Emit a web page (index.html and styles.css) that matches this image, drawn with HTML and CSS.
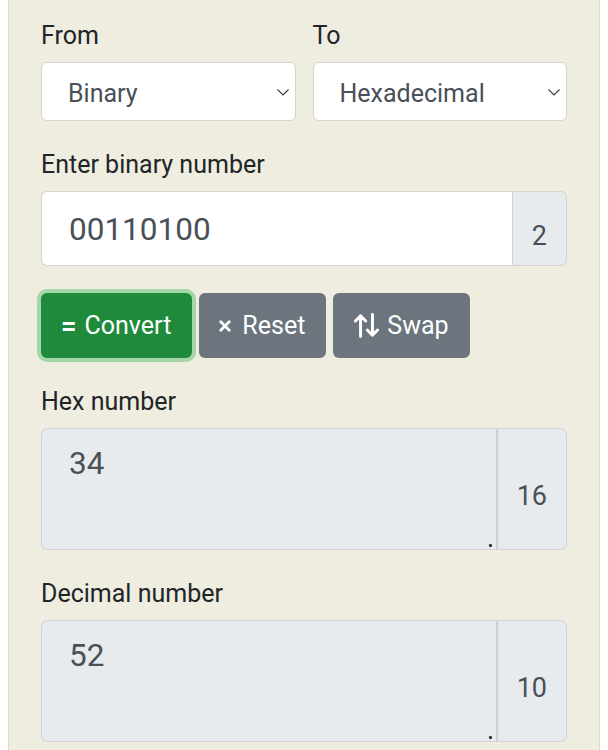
FILE: index.html
```html
<!DOCTYPE html>
<html lang="en">
<head>
<meta charset="utf-8">
<title>Binary to Hex converter</title>
<link rel="stylesheet" href="styles.css">
</head>
<body>
<main class="card">
  <div class="row group">
    <div class="col">
      <div class="label">From</div>
      <div class="select">
        <span>Binary</span>
        <svg class="chev" viewBox="0 0 12 7" width="12" height="7"><polyline points="0.5,0.5 6,6 11.5,0.5" fill="none" stroke="#343a40" stroke-width="1.1"/></svg>
      </div>
    </div>
    <div class="col">
      <div class="label">To</div>
      <div class="select">
        <span>Hexadecimal</span>
        <svg class="chev" viewBox="0 0 12 7" width="12" height="7"><polyline points="0.5,0.5 6,6 11.5,0.5" fill="none" stroke="#343a40" stroke-width="1.1"/></svg>
      </div>
    </div>
  </div>

  <div class="group">
    <div class="label">Enter binary number</div>
    <div class="input-group">
      <div class="input">00110100</div>
      <div class="addon">2</div>
    </div>
  </div>

  <div class="buttons group">
    <button class="btn btn-success"><span class="eq">=</span><span>Convert</span></button>
    <button class="btn btn-secondary btn-reset"><svg class="x" viewBox="0 0 10 10" width="12" height="12"><path d="M1.5 1.5 L8.5 8.5 M8.5 1.5 L1.5 8.5" stroke="#fff" stroke-width="2.3" stroke-linecap="round"/></svg><span>Reset</span></button>
    <button class="btn btn-secondary btn-swap"><svg class="swap" viewBox="0 0 16 16" width="27" height="25"><path d="M4.2 15 V1.8 M0.9 5.1 L4.2 1.8 L7.5 5.1 M11.8 1 V14.2 M8.5 10.9 L11.8 14.2 L15.1 10.9" fill="none" stroke="#fff" stroke-width="1.9" stroke-linecap="round" stroke-linejoin="round"/></svg><span>Swap</span></button>
  </div>

  <div class="group">
    <div class="label">Hex number</div>
    <div class="input-group tall">
      <div class="output">34</div>
      <div class="addon">16</div>
    </div>
  </div>

  <div class="group">
    <div class="label">Decimal number</div>
    <div class="input-group tall">
      <div class="output">52</div>
      <div class="addon">10</div>
    </div>
  </div>
</main>
</body>
</html>
```

FILE: styles.css
```css
html, body {
  background: #ffffff;
}
body {
  margin: 0 8px;
  font-family: Roboto, "Noto Sans", "Liberation Sans", sans-serif;
  color: #212529;
}
.card {
  background: #efeddf;
  border-left: 1px solid #dddbc9;
  border-right: 1px solid #dddbc9;
  padding: 19px 32px 40px 32px;
}
.group {
  margin-bottom: 27px;
}
.row {
  display: grid;
  grid-template-columns: 1fr 1fr;
  column-gap: 17px;
}
.label {
  font-size: 25px;
  line-height: 33px;
  margin-bottom: 10px;
  color: #212529;
}
.select {
  height: 59px;
  box-sizing: border-box;
  background: #fff;
  border: 1px solid #d3d3cf;
  border-radius: 6px;
  display: flex;
  align-items: center;
  justify-content: space-between;
  padding: 3px 6px 0 26px;
  font-size: 25px;
  color: #495057;
}
.chev {
  display: block;
  margin-top: -1px;
}
.input-group {
  display: flex;
  height: 75px;
}
.input-group.tall {
  height: 122px;
}
.input {
  flex: 1;
  background: #fff;
  border: 1px solid #d3d3cf;
  border-right: none;
  border-radius: 6px 0 0 6px;
  display: flex;
  align-items: center;
  padding: 2px 0 0 27px;
  font-size: 31.5px;
  color: #495057;
}
.output {
  flex: 1;
  position: relative;
  background: #e8ebee;
  border: 1px solid #d3d3cf;
  border-right: 1px solid #cdd1d5;
  border-radius: 6px 0 0 6px;
  padding: 11px 27px 7px 27px;
  font-size: 31.5px;
  line-height: 48px;
  color: #495057;
}
.output::after {
  content: "";
  position: absolute;
  right: 4px;
  bottom: 2px;
  width: 3px;
  height: 3px;
  border-radius: 1px;
  background: #333;
  transform: rotate(-45deg);
}
.addon {
  background: #e8ebee;
  border: 1px solid #d3d3cf;
  border-left: 1px solid #cdd1d5;
  border-radius: 0 6px 6px 0;
  display: flex;
  align-items: center;
  justify-content: center;
  padding: 14px 19px 0 19px;
  font-size: 27px;
  color: #495057;
}
.buttons {
  display: flex;
  gap: 7px;
}
.btn {
  height: 65px;
  border: none;
  border-radius: 6px;
  color: #fff;
  font-family: Roboto, "Noto Sans", "Liberation Sans", sans-serif;
  font-size: 25px;
  padding: 0 21px 0 20px;
  display: flex;
  align-items: center;
  gap: 8px;
}
.btn-success {
  background: #1f8a3b;
  box-shadow: 0 0 0 4px #a5d6a7;
}
.btn-secondary {
  background: #6c757d;
}
.btn-reset {
  gap: 11px;
}
.btn-swap {
  gap: 7px;
}
.eq {
  font-weight: 700;
  font-size: 27px;
}
.x, .swap {
  display: block;
}
```
